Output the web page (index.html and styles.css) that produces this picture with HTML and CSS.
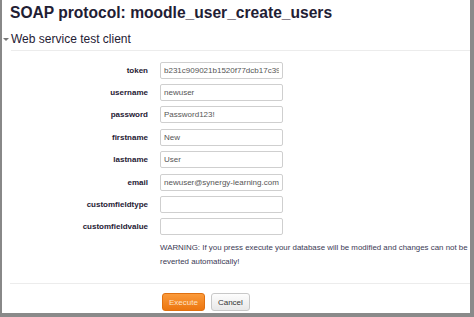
FILE: index.html
```html
<!DOCTYPE html>
<html lang="en">
<head>
    <meta charset="UTF-8">
    <title>SOAP protocol: moodle_user_create_users</title>
    <link rel="stylesheet" href="styles.css">
</head>
<body>
    <div class="frame">
        <h2 class="title">SOAP protocol: moodle_user_create_users</h2>
        <div class="legend"><span class="arrow"></span>Web service test client</div>
        <form class="form">
            <div class="row"><label>token</label><input type="text" value="b231c909021b1520f77dcb17c39e"></div>
            <div class="row"><label>username</label><input type="text" value="newuser"></div>
            <div class="row"><label>password</label><input type="text" value="Password123!"></div>
            <div class="row"><label>firstname</label><input type="text" value="New"></div>
            <div class="row"><label>lastname</label><input type="text" value="User"></div>
            <div class="row"><label>email</label><input type="text" value="newuser@synergy-learning.com"></div>
            <div class="row"><label>customfieldtype</label><input type="text" value=""></div>
            <div class="row"><label>customfieldvalue</label><input type="text" value=""></div>
            <p class="warning">WARNING: If you press execute your database will be modified and changes can not be reverted automatically!</p>
            <div class="buttons">
                <button type="button" class="btn primary">Execute</button>
                <button type="button" class="btn">Cancel</button>
            </div>
        </form>
    </div>
</body>
</html>
```

FILE: styles.css
```css
body {
    margin: 0;
    font-family: "Liberation Sans", Arial, sans-serif;
    background: #fff;
}
.frame {
    width: 468px;
    height: 313px;
    border-left: 2px solid #888;
    border-right: 4px solid #8a8a8a;
    border-bottom: 4px solid #8a8a8a;
    overflow: hidden;
    color: #1f2034;
}
.title {
    margin: 0;
    padding: 2px 0 0 8px;
    font-size: 15.6px;
    line-height: 22px;
    font-weight: bold;
}
.legend {
    position: relative;
    margin: 8px 0 0 9px;
    padding-bottom: 4px;
    font-size: 12px;
    line-height: 14px;
    border-bottom: 1px solid #ececec;
}
.arrow {
    position: absolute;
    left: -8px;
    top: 6px;
    border-left: 3px solid transparent;
    border-right: 3px solid transparent;
    border-top: 3px solid #777;
}
.form {
    padding-top: 8px;
}
.row {
    display: grid;
    grid-template-columns: 146px 123px;
    column-gap: 12px;
    align-items: center;
    height: 22.4px;
}
.row label {
    text-align: right;
    font-size: 8px;
    font-weight: bold;
}
.row input {
    box-sizing: border-box;
    width: 123px;
    height: 17px;
    margin: 0;
    padding: 0 3px;
    border: 1px solid #cfcfcf;
    border-radius: 2px;
    font-family: inherit;
    font-size: 8px;
    color: #555;
}
.warning {
    margin: 3px 0 0 158px;
    font-size: 7.9px;
    line-height: 14px;
    color: #3b3a55;
}
.buttons {
    margin: 14px 0 0 8px;
    padding: 9px 0 0 152px;
    border-top: 1px solid #ececec;
    display: flex;
    gap: 6px;
}
.btn {
    height: 18px;
    padding: 0 6px;
    font-family: inherit;
    font-size: 8px;
    color: #333;
    background: linear-gradient(#fdfdfd, #e8e8e8);
    border: 1px solid #c8c8c8;
    border-radius: 3px;
}
.btn.primary {
    color: #fde3c8;
    background: linear-gradient(#fb9a3a, #ec7610);
    border-color: #e07010;
}
```
